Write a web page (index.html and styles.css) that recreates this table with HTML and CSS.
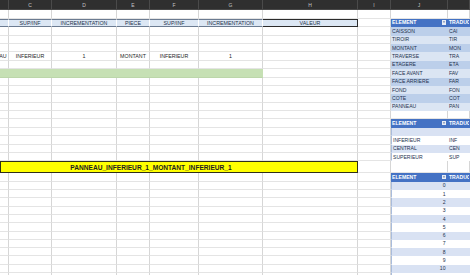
FILE: index.html
```html
<!DOCTYPE html>
<html lang="fr">
<head>
<meta charset="utf-8">
<title>Feuille</title>
<link rel="stylesheet" href="styles.css">
</head>
<body>
<div class="sheet">
  <div class="row colhead">
    <div class="ch"></div><div class="ch">C</div><div class="ch">D</div><div class="ch">E</div><div class="ch">F</div><div class="ch">G</div><div class="ch">H</div><div class="ch">I</div><div class="ch">J</div><div class="ch"></div>
  </div>
  <div class="row r1">
    <div class="c"></div><div class="c"></div><div class="c"></div><div class="c"></div><div class="c"></div><div class="c"></div><div class="c"></div><div class="c"></div><div class="c"></div><div class="c"></div>
  </div>
  <div class="row">
    <div class="c th"></div><div class="c th">SUP/INF</div><div class="c th">INCREMENTATION</div><div class="c th">PIECE</div><div class="c th">SUP/INF</div><div class="c th">INCREMENTATION</div><div class="c th th-sel">VALEUR</div><div class="c"></div>
    <div class="c tb-head l">ELEMENT<span class="dd"><svg viewBox="0 0 4 4" width="4" height="4"><polygon points="0.8,1.4 3.2,1.4 2,2.8" fill="#3b5b93"/></svg></span></div><div class="c tb-head l">TRADUCTION</div>
  </div>
  <div class="row">
    <div class="c"></div><div class="c"></div><div class="c"></div><div class="c"></div><div class="c"></div><div class="c"></div><div class="c"></div><div class="c"></div>
    <div class="c b1 l">CAISSON</div><div class="c b1 l">CAI</div>
  </div>
  <div class="row">
    <div class="c"></div><div class="c"></div><div class="c"></div><div class="c"></div><div class="c"></div><div class="c"></div><div class="c"></div><div class="c"></div>
    <div class="c b2 l">TIROIR</div><div class="c b2 l">TIR</div>
  </div>
  <div class="row">
    <div class="c"></div><div class="c"></div><div class="c"></div><div class="c"></div><div class="c"></div><div class="c"></div><div class="c"></div><div class="c"></div>
    <div class="c b1 l">MONTANT</div><div class="c b1 l">MON</div>
  </div>
  <div class="row">
    <div class="c r"><span>PANNEAU</span></div><div class="c">INFERIEUR</div><div class="c">1</div><div class="c">MONTANT</div><div class="c">INFERIEUR</div><div class="c">1</div><div class="c"></div><div class="c"></div>
    <div class="c b2 l">TRAVERSE</div><div class="c b2 l">TRA</div>
  </div>
  <div class="row">
    <div class="c"></div><div class="c"></div><div class="c"></div><div class="c"></div><div class="c"></div><div class="c"></div><div class="c"></div><div class="c"></div>
    <div class="c b1 l">ETAGERE</div><div class="c b1 l">ETA</div>
  </div>
  <div class="row">
    <div class="c green"></div><div class="c"></div><div class="c"></div>
    <div class="c b2 l">FACE AVANT</div><div class="c b2 l">FAV</div>
  </div>
  <div class="row">
    <div class="c"></div><div class="c"></div><div class="c"></div><div class="c"></div><div class="c"></div><div class="c"></div><div class="c"></div><div class="c"></div>
    <div class="c b1 l">FACE ARRIERE</div><div class="c b1 l">FAR</div>
  </div>
  <div class="row">
    <div class="c"></div><div class="c"></div><div class="c"></div><div class="c"></div><div class="c"></div><div class="c"></div><div class="c"></div><div class="c"></div>
    <div class="c b2 l">FOND</div><div class="c b2 l">FON</div>
  </div>
  <div class="row">
    <div class="c"></div><div class="c"></div><div class="c"></div><div class="c"></div><div class="c"></div><div class="c"></div><div class="c"></div><div class="c"></div>
    <div class="c b1 l">COTE</div><div class="c b1 l">COT</div>
  </div>
  <div class="row">
    <div class="c"></div><div class="c"></div><div class="c"></div><div class="c"></div><div class="c"></div><div class="c"></div><div class="c"></div><div class="c"></div>
    <div class="c b2 l">PANNEAU</div><div class="c b2 l">PAN</div>
  </div>
  <div class="row">
    <div class="c"></div><div class="c"></div><div class="c"></div><div class="c"></div><div class="c"></div><div class="c"></div><div class="c"></div><div class="c"></div><div class="c"></div><div class="c"></div>
  </div>
  <div class="row">
    <div class="c"></div><div class="c"></div><div class="c"></div><div class="c"></div><div class="c"></div><div class="c"></div><div class="c"></div><div class="c"></div>
    <div class="c tb-head l">ELEMENT<span class="dd"><svg viewBox="0 0 4 4" width="4" height="4"><polygon points="0.8,1.4 3.2,1.4 2,2.8" fill="#3b5b93"/></svg></span></div><div class="c tb-head l">TRADUCTION</div>
  </div>
  <div class="row">
    <div class="c"></div><div class="c"></div><div class="c"></div><div class="c"></div><div class="c"></div><div class="c"></div><div class="c"></div><div class="c"></div>
    <div class="c lb l"></div><div class="c lb l"></div>
  </div>
  <div class="row">
    <div class="c"></div><div class="c"></div><div class="c"></div><div class="c"></div><div class="c"></div><div class="c"></div><div class="c"></div><div class="c"></div>
    <div class="c wb l">INFERIEUR</div><div class="c wb l">INF</div>
  </div>
  <div class="row">
    <div class="c"></div><div class="c"></div><div class="c"></div><div class="c"></div><div class="c"></div><div class="c"></div><div class="c"></div><div class="c"></div>
    <div class="c lb l">CENTRAL</div><div class="c lb l">CEN</div>
  </div>
  <div class="row">
    <div class="c"></div><div class="c"></div><div class="c"></div><div class="c"></div><div class="c"></div><div class="c"></div><div class="c"></div><div class="c"></div>
    <div class="c wb l">SUPERIEUR</div><div class="c wb l">SUP</div>
  </div>
  <div class="row tall">
    <div class="c yellow"><span>PANNEAU_INFERIEUR_1_MONTANT_INFERIEUR_1</span></div><div class="c"></div><div class="c"></div><div class="c"></div>
  </div>
  <div class="row lo">
    <div class="c"></div><div class="c"></div><div class="c"></div><div class="c"></div><div class="c"></div><div class="c"></div><div class="c"></div><div class="c"></div>
    <div class="c tb-head l">ELEMENT<span class="dd"><svg viewBox="0 0 4 4" width="4" height="4"><polygon points="0.8,1.4 3.2,1.4 2,2.8" fill="#3b5b93"/></svg></span></div><div class="c tb-head l">TRADUCTION</div>
  </div>
  <div class="row lo"><div class="c"></div><div class="c"></div><div class="c"></div><div class="c"></div><div class="c"></div><div class="c"></div><div class="c"></div><div class="c"></div><div class="c lb r num">0</div><div class="c lb"></div></div>
  <div class="row lo"><div class="c"></div><div class="c"></div><div class="c"></div><div class="c"></div><div class="c"></div><div class="c"></div><div class="c"></div><div class="c"></div><div class="c wb r num">1</div><div class="c wb"></div></div>
  <div class="row lo"><div class="c"></div><div class="c"></div><div class="c"></div><div class="c"></div><div class="c"></div><div class="c"></div><div class="c"></div><div class="c"></div><div class="c lb r num">2</div><div class="c lb"></div></div>
  <div class="row lo"><div class="c"></div><div class="c"></div><div class="c"></div><div class="c"></div><div class="c"></div><div class="c"></div><div class="c"></div><div class="c"></div><div class="c wb r num">3</div><div class="c wb"></div></div>
  <div class="row lo"><div class="c"></div><div class="c"></div><div class="c"></div><div class="c"></div><div class="c"></div><div class="c"></div><div class="c"></div><div class="c"></div><div class="c lb r num">4</div><div class="c lb"></div></div>
  <div class="row lo"><div class="c"></div><div class="c"></div><div class="c"></div><div class="c"></div><div class="c"></div><div class="c"></div><div class="c"></div><div class="c"></div><div class="c wb r num">5</div><div class="c wb"></div></div>
  <div class="row lo"><div class="c"></div><div class="c"></div><div class="c"></div><div class="c"></div><div class="c"></div><div class="c"></div><div class="c"></div><div class="c"></div><div class="c lb r num">6</div><div class="c lb"></div></div>
  <div class="row lo"><div class="c"></div><div class="c"></div><div class="c"></div><div class="c"></div><div class="c"></div><div class="c"></div><div class="c"></div><div class="c"></div><div class="c wb r num">7</div><div class="c wb"></div></div>
  <div class="row lo"><div class="c"></div><div class="c"></div><div class="c"></div><div class="c"></div><div class="c"></div><div class="c"></div><div class="c"></div><div class="c"></div><div class="c lb r num">8</div><div class="c lb"></div></div>
  <div class="row lo"><div class="c"></div><div class="c"></div><div class="c"></div><div class="c"></div><div class="c"></div><div class="c"></div><div class="c"></div><div class="c"></div><div class="c wb r num">9</div><div class="c wb"></div></div>
  <div class="row lo"><div class="c"></div><div class="c"></div><div class="c"></div><div class="c"></div><div class="c"></div><div class="c"></div><div class="c"></div><div class="c"></div><div class="c lb r num">10</div><div class="c lb"></div></div>
  <div class="row lo"><div class="c"></div><div class="c"></div><div class="c"></div><div class="c"></div><div class="c"></div><div class="c"></div><div class="c"></div><div class="c"></div><div class="c wb r num">11</div><div class="c wb"></div></div>
</div>
</body>
</html>
```

FILE: styles.css
```css
* { box-sizing: border-box; }
html, body {
  margin: 0;
  padding: 0;
  background: #ffffff;
  overflow: hidden;
}
body {
  font-family: "Liberation Sans", Arial, sans-serif;
  width: 470px;
  height: 275px;
}
.sheet {
  width: 470px;
}
.row {
  display: grid;
  grid-template-columns: 9px 43px 65px 33px 49px 64px 95px 33px 57px 22px;
  height: 8.4px;
}
.colhead {
  height: 10px;
  background: #2f2f2f;
  border-bottom: 1px solid #474747;
}
.ch {
  border-right: 1px solid #4a4a4a;
  color: #c4c4c4;
  font-size: 5px;
  display: flex;
  align-items: center;
  justify-content: center;
}
.r1 { height: 8.8px; }
.tall { height: 12px; }
.lo { height: 8.3px; }

.c {
  min-width: 0;
  border-right: 1px solid #d6d6d6;
  border-bottom: 1px solid #e4e4e4;
  font-size: 5.3px;
  color: #262626;
  display: flex;
  align-items: center;
  justify-content: center;
  white-space: nowrap;
}
.c.l {
  justify-content: flex-start;
  padding-left: 1px;
}
.c.r {
  justify-content: flex-end;
  padding-right: 1.5px;
}
.num { padding-right: 3px; }

.th {
  background: #dce7f4;
  border-top: 1px solid #6b7b91;
  border-bottom: 1px solid #6b7b91;
  border-right: 1px solid #ffffff;
  color: #25324a;
}
.th-sel {
  border-right: 1px solid #2b2b2b;
  border-top-color: #2b2b2b;
  border-bottom-color: #2b2b2b;
}

.green {
  grid-column: 1 / 7;
  background: #c6e0b4;
  border-right: 1px solid #c6e0b4;
  border-bottom: 1px solid #bcd6aa;
}

.tb-head {
  background: #4472c4;
  color: #ffffff;
  font-weight: bold;
  border-right: 1px solid #4472c4;
  border-bottom: 1px solid #4472c4;
  font-size: 5.1px;
  overflow: hidden;
}
.dd {
  margin-left: auto;
  margin-right: 1px;
  width: 4.5px;
  height: 4.5px;
  background: #e9edf4;
  display: flex;
  align-items: center;
  justify-content: center;
}
.dd svg { display: block; }

.b1, .b2, .lb, .wb {
  color: #24324d;
  font-size: 5.1px;
}
.b1 {
  background: #bccfea;
  border-right-color: #bccfea;
  border-bottom-color: #bccfea;
}
.b2 {
  background: #dbe5f3;
  border-right-color: #dbe5f3;
  border-bottom-color: #dbe5f3;
}
.lb {
  background: #d9e2f3;
  border-right-color: #d9e2f3;
  border-bottom-color: #d9e2f3;
}
.wb {
  background: #ffffff;
  border-right-color: #ffffff;
  border-bottom-color: #ffffff;
}
.row > .c:nth-child(9).lb,
.row > .c:nth-child(9).wb {
  border-left: 1px solid #a9bcdc;
}

.yellow {
  grid-column: 1 / 8;
  background: #ffff00;
  border: 1px solid #2f2f1a;
  font-weight: bold;
  font-size: 6.6px;
  color: #1e1e1e;
  padding-right: 56px;
}
```
